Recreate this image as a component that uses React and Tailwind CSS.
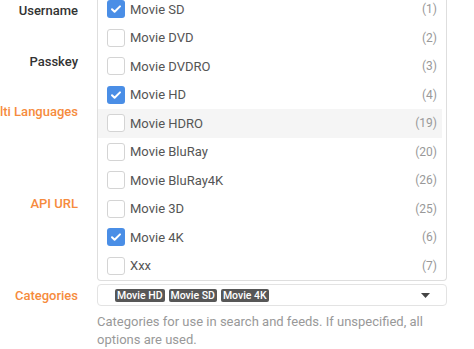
const options = [
  { name: 'Movie SD', count: 1, checked: true },
  { name: 'Movie DVD', count: 2 },
  { name: 'Movie DVDRO', count: 3 },
  { name: 'Movie HD', count: 4, checked: true },
  { name: 'Movie HDRO', count: 19, hover: true },
  { name: 'Movie BluRay', count: 20 },
  { name: 'Movie BluRay4K', count: 26 },
  { name: 'Movie 3D', count: 25 },
  { name: 'Movie 4K', count: 6, checked: true },
  { name: 'Xxx', count: 7 },
]

const tags = ['Movie HD', 'Movie SD', 'Movie 4K']

const Check = ({ checked }) =>
  checked ? (
    <span className="flex h-[18px] w-[18px] items-center justify-center rounded-[3px] bg-[#4a8ee6]">
      <svg width="12" height="12" viewBox="0 0 12 12" fill="none">
        <path d="M2 6.2l2.6 2.6L10 3.4" stroke="white" strokeWidth="2" strokeLinecap="round" strokeLinejoin="round" />
      </svg>
    </span>
  ) : (
    <span className="h-[18px] w-[18px] rounded-[3px] border border-[#d4d4d4] bg-white" />
  )

const Label = ({ children, orange, className = '' }) => (
  <div
    className={`flex h-[22px] items-center justify-end whitespace-nowrap text-[13px] font-medium ${
      orange ? 'text-[#f68b3d]' : 'text-[#333]'
    } ${className}`}
  >
    {children}
  </div>
)

export default function App() {
  return (
    <div className="flex h-[349px] w-[474px] overflow-hidden bg-white font-['Roboto',sans-serif]">
      <div className="flex w-[78px] shrink-0 flex-col">
        <Label>Username</Label>
        <Label className="mt-[29px]">Passkey</Label>
        <Label orange className="mt-[28px]">Multi Languages</Label>
        <Label orange className="mt-[70px]">API URL</Label>
        <Label orange className="mt-[70px]">Categories</Label>
      </div>

      <div className="ml-[19px] flex w-[350px] shrink-0 flex-col">
        <div className="-mt-[6px] rounded-b-[4px] border border-t-0 border-[#dedede] bg-white pt-px">
          {options.map((o) => (
            <div
              key={o.name}
              className={`flex h-[28.5px] items-center pl-[9px] pr-[9px] text-[13px] ${o.hover ? 'mr-[4px] bg-[#f5f5f5]' : ''}`}
            >
              <Check checked={o.checked} />
              <span className="ml-[5px] text-[#555]">{o.name}</span>
              <span className={`ml-auto text-[12px] text-[#999] ${o.hover ? 'mr-[-4px]' : ''}`}>({o.count})</span>
            </div>
          ))}
        </div>

        <div className="mt-[3px] flex h-[30px] items-center rounded-[4px] border border-[#e3e3e3] pl-[17px] pr-[16px]">
          <div className="flex gap-[4px]">
            {tags.map((t) => (
              <span
                key={t}
                className="rounded-[2px] bg-[#575757] px-[2px] text-[10.5px] font-medium leading-[13px] text-white"
              >
                {t}
              </span>
            ))}
          </div>
          <svg className="ml-auto" width="9" height="5" viewBox="0 0 9 5">
            <path d="M0 0h9L4.5 5z" fill="#444" />
          </svg>
        </div>

        <p className="mt-[7px] text-[13px] leading-[18px] text-[#999]">
          Categories for use in search and feeds. If unspecified, all options are used.
        </p>
      </div>
    </div>
  )
}
